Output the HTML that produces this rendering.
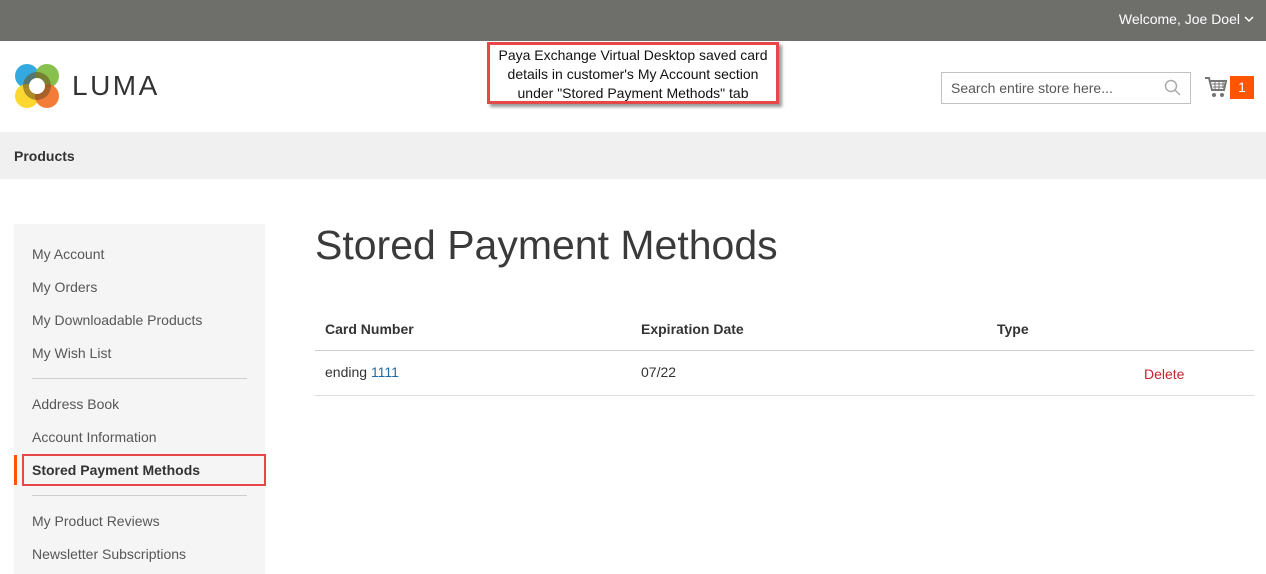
<!DOCTYPE html>
<html><head><meta charset="utf-8"><style>
*{margin:0;padding:0;box-sizing:border-box}
body{width:1266px;height:574px;overflow:hidden;background:#fff;font-family:"Liberation Sans",sans-serif;color:#333;position:relative;font-size:14px}
.abs{position:absolute}
.top{left:0;top:0;width:1266px;height:41px;background:#6e6f6b}
.nav{left:0;top:132px;width:1266px;height:47px;background:#f0f0f0}
.side{left:14px;top:224px;width:251px;height:350px;background:#f5f5f5}
.si{position:absolute;left:32px;font-size:14px;color:#575757}
.hr{position:absolute;left:32px;width:215px;height:1px;background:#ccc}
.th{font-weight:bold;font-size:14px;color:#333}
</style></head><body>
<div class="abs top"></div>
<div class="abs" style="right:26px;top:11px;color:#fff;font-size:14px">Welcome, Joe Doel</div>
<svg class="abs" style="left:1244px;top:15px" width="10" height="8"><path d="M1 2 L5 6 L9 2" stroke="#fff" stroke-width="1.5" fill="none"/></svg>
<svg class="abs" style="left:14px;top:63px" width="46" height="46" viewBox="0 0 46 46">
<circle cx="13" cy="13" r="12" fill="#1ea0dc" opacity=".9"/>
<circle cx="33" cy="13" r="12" fill="#7ab93a" opacity=".9"/>
<circle cx="13" cy="33" r="12" fill="#fbd319" opacity=".9"/>
<circle cx="33" cy="33" r="12" fill="#f26e24" opacity=".9"/>
<circle cx="23" cy="23" r="14" fill="#6b4a1f" opacity=".55"/>
<circle cx="23" cy="23" r="8" fill="#fff"/></svg>
<div class="abs" style="left:72px;top:70px;font-size:28px;letter-spacing:2.5px;color:#333">LUMA</div>
<div class="abs" style="left:487px;top:42px;width:292px;height:62px;border:3px solid #e8474a;box-shadow:3px 3px 3px #999;background:#fff;text-align:center;font-size:14px;line-height:19px;color:#111;padding-top:1px">Paya Exchange Virtual Desktop saved card details in customer's My Account section under "Stored Payment Methods" tab</div>
<div class="abs" style="left:941px;top:72px;width:250px;height:32px;border:1px solid #c2c2c2;padding:7px 9px;color:#575757;font-size:14px">Search entire store here...</div>
<svg class="abs" style="left:1164px;top:79px" width="18" height="18"><circle cx="7" cy="7" r="5.5" stroke="#aaa" stroke-width="1.5" fill="none"/><path d="M11 11 L16 16" stroke="#aaa" stroke-width="1.5"/></svg>
<svg class="abs" style="left:1204px;top:76px" width="24" height="22"><path d="M1 2 H5 L8 14 H20 L22 5 H6" stroke="#757575" stroke-width="2" fill="none"/><path d="M8 8 H21 M9 11 H20 M11 5 V14 M15 5 V14 M19 5 V12" stroke="#757575" stroke-width="1"/><circle cx="10" cy="19" r="2" fill="#757575"/><circle cx="18" cy="19" r="2" fill="#757575"/></svg>
<div class="abs" style="left:1230px;top:76px;width:24px;height:23px;background:#ff5501;color:#fff;text-align:center;line-height:23px">1</div>
<div class="abs nav"></div>
<div class="abs" style="left:14px;top:148px;font-weight:bold;color:#333">Products</div>
<div class="abs side"></div>
<div class="si" style="top:246px">My Account</div>
<div class="si" style="top:279px">My Orders</div>
<div class="si" style="top:312px">My Downloadable Products</div>
<div class="si" style="top:345px">My Wish List</div>
<div class="hr" style="top:378px"></div>
<div class="si" style="top:396px">Address Book</div>
<div class="si" style="top:429px">Account Information</div>
<div class="abs" style="left:14px;top:455px;width:3px;height:30px;background:#ff5501"></div>
<div class="abs" style="left:22px;top:454px;width:244px;height:32px;border:2px solid #e8474a"></div>
<div class="si" style="top:462px;color:#333;font-weight:bold">Stored Payment Methods</div>
<div class="hr" style="top:495px"></div>
<div class="si" style="top:513px">My Product Reviews</div>
<div class="si" style="top:546px">Newsletter Subscriptions</div>
<div class="abs" style="left:315px;top:222px;font-size:41px;color:#3a3a3a">Stored Payment Methods</div>
<div class="abs th" style="left:325px;top:321px">Card Number</div>
<div class="abs th" style="left:641px;top:321px">Expiration Date</div>
<div class="abs th" style="left:997px;top:321px">Type</div>
<div class="abs" style="left:315px;top:350px;width:939px;height:1px;background:#ccc"></div>
<div class="abs" style="left:325px;top:364px">ending <span style="color:#1f6aa5;font-size:14px">1111</span></div>
<div class="abs" style="left:641px;top:364px">07/22</div>
<div class="abs" style="left:1144px;top:366px;color:#c5232e">Delete</div>
<div class="abs" style="left:315px;top:395px;width:939px;height:1px;background:#ddd"></div>
</body></html>
